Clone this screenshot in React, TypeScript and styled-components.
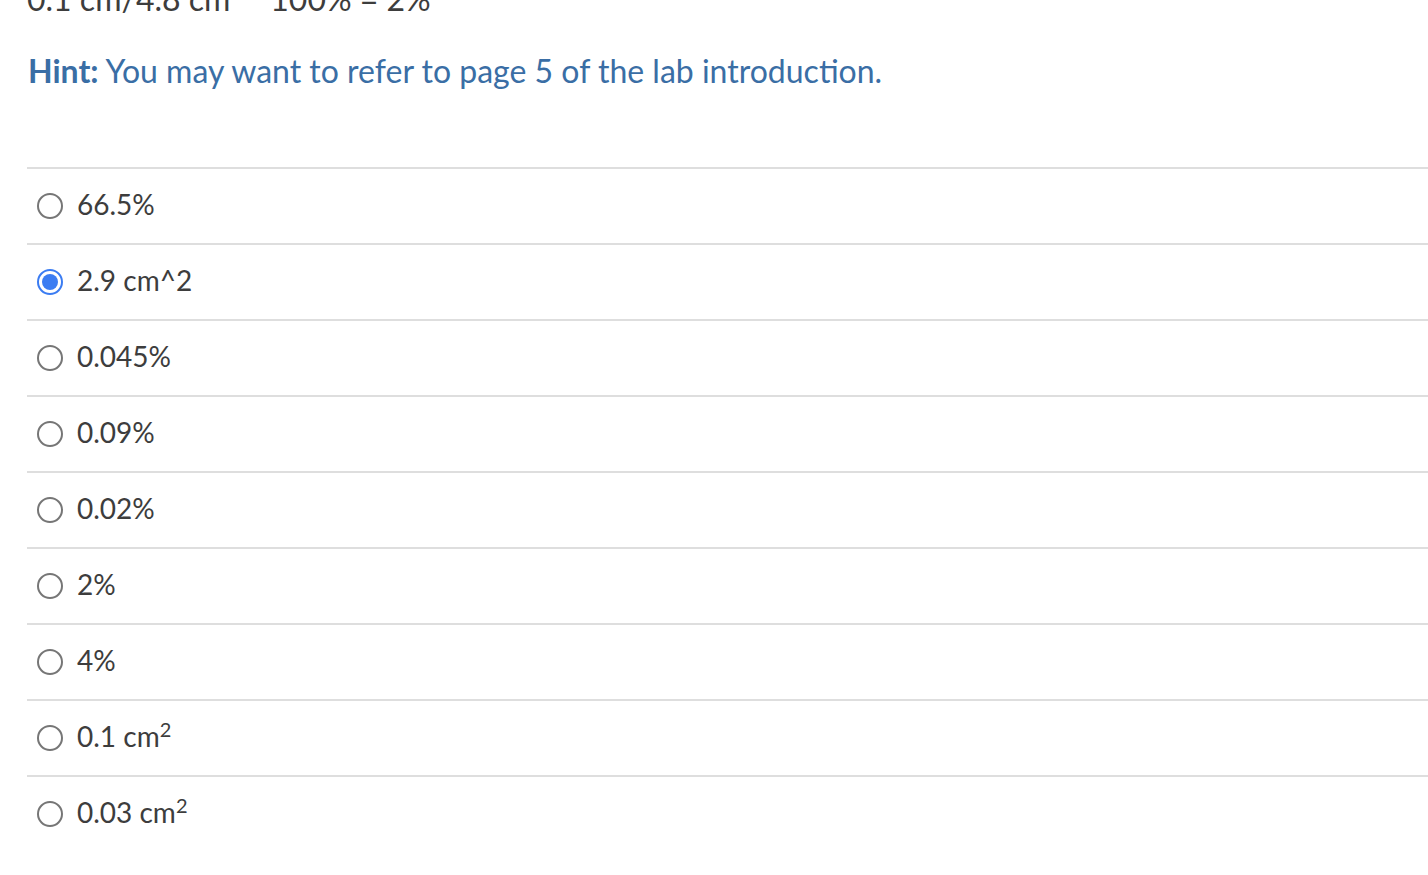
import React from "react";
import styled, { createGlobalStyle } from "styled-components";

const GlobalStyle = createGlobalStyle`
  html, body { margin: 0; padding: 0; background: #ffffff; }
  body { font-family: Lato, "Open Sans", "Liberation Sans", sans-serif; color: #3d3d3d; overflow: hidden; }
`;

const Page = styled.div`
  padding-left: 27px;
  margin-top: -23px;
`;

const Formula = styled.p`
  margin: 0;
  font-size: 32px;
  line-height: 44px;
  color: #3d3d3d;
  white-space: nowrap;
`;

const FormulaSup = styled.sup`
  font-size: 17px;
  line-height: 0;
`;

const Hint = styled.p`
  margin: 28px 0 0 1px;
  font-size: 32px;
  line-height: 44px;
  color: #3a6ea5;
  white-space: nowrap;
`;

const Answers = styled.ul`
  list-style: none;
  margin: 74px 0 0;
  padding: 0;
`;

const Row = styled.li`
  display: flex;
  align-items: center;
  gap: 14px;
  height: 74px;
  padding-left: 10px;
  border-top: 2px solid #dedede;
`;

const Radio = styled.span<{ $checked?: boolean }>`
  box-sizing: border-box;
  width: 26px;
  height: 26px;
  border-radius: 50%;
  flex: none;
  margin-top: -1px;
  border: 2px solid ${(p) => (p.$checked ? "#3b7cf2" : "#767676")};
  display: flex;
  align-items: center;
  justify-content: center;
  &::after {
    content: "";
    display: ${(p) => (p.$checked ? "block" : "none")};
    width: 16px;
    height: 16px;
    border-radius: 50%;
    background: #3b7cf2;
  }
`;

const Label = styled.span`
  font-size: 28px;
  color: #3d3d3d;
  line-height: 1;
  margin-top: -4px;
`;

const Sup = styled.sup`
  font-size: 20px;
  line-height: 0;
`;

type Answer = { text: React.ReactNode; checked?: boolean };

const answers: Answer[] = [
  { text: "66.5%" },
  { text: "2.9 cm^2", checked: true },
  { text: "0.045%" },
  { text: "0.09%" },
  { text: "0.02%" },
  { text: "2%" },
  { text: "4%" },
  { text: <>0.1 cm<Sup>2</Sup></> },
  { text: <>0.03 cm<Sup>2</Sup></> },
];

export default function App() {
  return (
    <>
      <GlobalStyle />
      <Page>
        <Formula>
          0.1 cm/4.8 cm<FormulaSup>2</FormulaSup> * 100% = 2%
        </Formula>
        <Hint>
          <strong>Hint:</strong> You may want to refer to page 5 of the lab introduction.
        </Hint>
        <Answers>
          {answers.map((a, i) => (
            <Row key={i}>
              <Radio $checked={a.checked} />
              <Label>{a.text}</Label>
            </Row>
          ))}
        </Answers>
      </Page>
    </>
  );
}
